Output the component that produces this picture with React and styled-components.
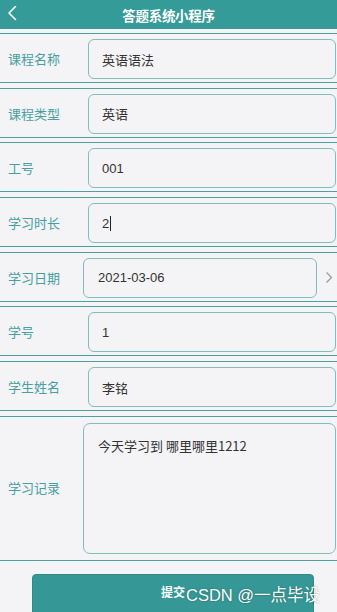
import styled, { createGlobalStyle } from 'styled-components'

const GlobalStyle = createGlobalStyle`
  html, body {
    margin: 0;
    padding: 0;
    background: #f4f3f6;
  }
  * {
    box-sizing: border-box;
  }
  body {
    font-family: "Liberation Sans", "Noto Sans CJK SC", sans-serif;
  }
`

const fields = [
  { label: '课程名称', value: '英语语法' },
  { label: '课程类型', value: '英语' },
  { label: '工号', value: '001' },
  { label: '学习时长', value: '2', caret: true },
  { label: '学习日期', value: '2021-03-06', picker: true },
  { label: '学号', value: '1' },
  { label: '学生姓名', value: '李铭' },
]

export default function App() {
  return (
    <>
      <GlobalStyle />
      <Page>
        <Header>
          <BackButton>
            <svg width="10" height="16" viewBox="0 0 10 16" fill="none">
              <path d="M8.5 1.5L2 8l6.5 6.5" stroke="#fff" strokeWidth="1.6" strokeLinecap="round" strokeLinejoin="round" />
            </svg>
          </BackButton>
          <Title>答题系统小程序</Title>
        </Header>

        <Form>
          {fields.map((f) => (
            <Row key={f.label}>
              <Label>{f.label}</Label>
              <Field $narrow={f.picker}>
                {f.value}
                {f.caret && <Caret />}
              </Field>
              {f.picker && (
                <Arrow>
                  <svg width="8" height="13" viewBox="0 0 8 13" fill="none">
                    <path d="M1.5 1.5l5 5-5 5" stroke="#9a9a9a" strokeWidth="1.3" />
                  </svg>
                </Arrow>
              )}
            </Row>
          ))}

          <Row $tall>
            <Label>学习记录</Label>
            <TextArea>今天学习到 哪里哪里1212</TextArea>
          </Row>
        </Form>

        <SubmitButton>提交</SubmitButton>
        <Watermark>CSDN @一点毕设</Watermark>
      </Page>
    </>
  )
}

const Page = styled.div`
  position: relative;
  width: 337px;
  height: 612px;
  overflow: hidden;
  background: #f4f3f6;
`

const Header = styled.div`
  position: relative;
  height: 29px;
  background: #349b98;
  display: flex;
  align-items: center;
  justify-content: center;
`

const BackButton = styled.div`
  position: absolute;
  left: 7px;
  top: 5px;
  display: flex;
`

const Title = styled.h1`
  margin: 0;
  color: #ffffff;
  font-size: 13.5px;
  font-weight: bold;
  font-family: "Noto Sans CJK SC", sans-serif;
  letter-spacing: -0.3px;
`

const Form = styled.div`
  padding-top: 4px;
  display: flex;
  flex-direction: column;
  gap: 4.7px;
`

const Row = styled.div`
  display: flex;
  align-items: center;
  border-top: 1px solid #4d9fa0;
  border-bottom: 1px solid #4d9fa0;
  padding: ${(p) => (p.$tall ? '6px 1px 6px 0' : '5px 1px 3px 0')};
`

const Label = styled.div`
  width: 83px;
  flex-shrink: 0;
  padding-left: 8px;
  color: #46a0a1;
  font-size: 13px;
  line-height: 18px;
  font-family: "Noto Sans CJK SC", sans-serif;
`

const Field = styled.div`
  flex: 1;
  height: 40px;
  margin-left: ${(p) => (p.$narrow ? '0' : '5px')};
  display: flex;
  align-items: center;
  padding-left: ${(p) => (p.$narrow ? '14px' : '13px')};
  border: 1px solid #82bdbd;
  border-radius: 6px;
  color: #333333;
  font-size: 13px;
`

const Caret = styled.span`
  display: inline-block;
  width: 1px;
  height: 15px;
  margin-left: 1px;
  background: #222222;
`

const Arrow = styled.div`
  width: 19px;
  display: flex;
  justify-content: center;
  padding-left: 4px;
`

const TextArea = styled.div`
  flex: 1;
  height: 131px;
  padding: 13px 14px;
  border: 1px solid #82bdbd;
  border-radius: 7px;
  color: #333333;
  font-size: 13px;
  font-family: "Noto Sans CJK SC", sans-serif;
  line-height: 18px;
`

const SubmitButton = styled.button`
  display: block;
  margin: 13px 0 0 32px;
  width: 282px;
  height: 42px;
  background: #359896;
  border: 1px solid #2e8987;
  border-radius: 4px;
  color: #ffffff;
  font-size: 12px;
  font-weight: bold;
  font-family: "Noto Sans CJK SC", sans-serif;
  padding: 0;
  padding-bottom: 6px;
`

const Watermark = styled.div`
  position: absolute;
  left: 186px;
  top: 582px;
  color: #ffffff;
  font-size: 16.5px;
  font-family: "Liberation Sans", "Noto Sans CJK SC", sans-serif;
  text-shadow: 0 0 2px rgba(0, 0, 0, 0.35);
  pointer-events: none;
`
